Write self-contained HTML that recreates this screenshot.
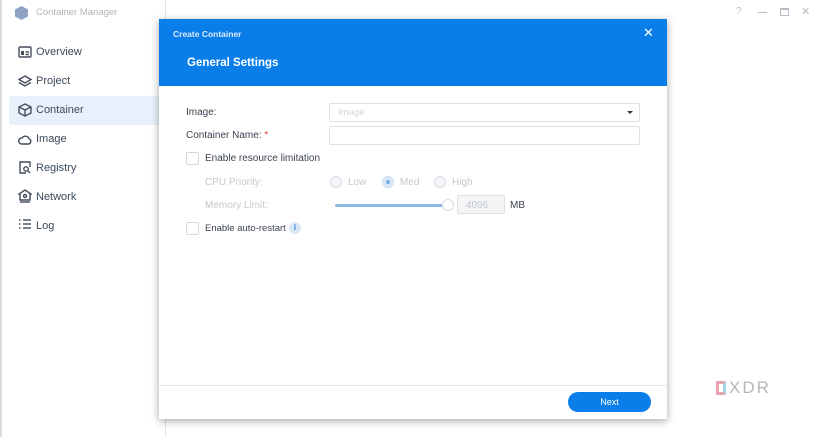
<!DOCTYPE html>
<html><head><style>
*{margin:0;padding:0;box-sizing:border-box}
body{width:825px;height:437px;overflow:hidden;background:#fff;font-family:"Liberation Sans",sans-serif;position:relative;color:#333}
.abs{position:absolute}
.nav{position:absolute;left:36px;font-size:11px;color:#3a4a5a}
.lbl{position:absolute;font-size:10px;color:#3b4350}
.dis{color:#c4c8cc}
.cb{position:absolute;width:13px;height:13px;border:1px solid #d5d9de;border-radius:2px;background:#fff}
.rad{position:absolute;width:12px;height:12px;border:1px solid #d6dde5;border-radius:50%;background:#f3f5f7}
</style></head><body>
<div class="abs" style="left:0;top:0;width:2px;height:437px;background:#d8dbe0"></div>
<div class="abs" style="left:165px;top:0;width:1px;height:437px;background:#e3e6ea"></div>
<div class="abs" style="left:15px;top:6px;width:13px;height:14px;background:#8ea3c4;clip-path:polygon(50% 0,100% 25%,100% 75%,50% 100%,0 75%,0 25%)"></div>
<div class="abs" style="left:36px;top:7px;font-size:9.5px;color:#b0b4ba">Container Manager</div>
<div class="abs" style="left:736px;top:6px;font-size:10px;color:#b8bcc2">?</div>
<div class="abs" style="left:758px;top:12px;width:9px;height:1px;background:#b8bcc2"></div>
<div class="abs" style="left:780px;top:8px;width:9px;height:8px;border:1px solid #b8bcc2;border-top-width:2px"></div>
<div class="abs" style="left:801px;top:5px;font-size:11px;color:#b8bcc2">✕</div>
<div class="abs" style="left:9px;top:96px;width:156px;height:29px;background:#e8f1fb;border-radius:3px"></div>
<svg class="abs" style="left:18px;top:45px" width="14" height="200" fill="none" stroke="#444d5c" stroke-width="1.4">
 <rect x="1" y="2" width="12" height="10" rx="1"/><rect x="3" y="6" width="3" height="4" fill="#444d5c" stroke="none"/><line x1="7.5" y1="7" x2="11" y2="7"/><line x1="7.5" y1="9.5" x2="11" y2="9.5"/>
 <path d="M7 31 L13 34.5 L7 38 L1 34.5 Z"/><path d="M1 37.5 L7 41 L13 37.5"/>
 <path d="M7 59 L13 62 L13 68 L7 71 L1 68 L1 62 Z"/><path d="M1 62 L7 65 L13 62 M7 65 L7 71"/>
 <path d="M3.5 99 A3 3 0 0 1 4 93 A4 4 0 0 1 11 93.5 A3 3 0 0 1 11 99 Z"/>
 <path d="M8 128 L2 128 L2 117 L12 117 L12 122"/><circle cx="8" cy="124" r="2.2"/><line x1="9.5" y1="125.5" x2="12" y2="128"/>
 <path d="M7 145 L13 149 L12 149 L12 155 L2 155 L2 149 L1 149 Z"/><circle cx="7" cy="151" r="1.5"/><line x1="2" y1="157" x2="12" y2="157"/>
 <line x1="1" y1="175" x2="2.5" y2="175"/><line x1="5" y1="175" x2="13" y2="175"/><line x1="1" y1="179" x2="2.5" y2="179"/><line x1="5" y1="179" x2="13" y2="179"/><line x1="1" y1="183" x2="2.5" y2="183"/><line x1="5" y1="183" x2="13" y2="183"/>
</svg>
<div class="nav" style="top:46px">Overview</div>
<div class="nav" style="top:75px">Project</div>
<div class="nav" style="top:104px">Container</div>
<div class="nav" style="top:133px">Image</div>
<div class="nav" style="top:162px">Registry</div>
<div class="nav" style="top:191px">Network</div>
<div class="nav" style="top:220px">Log</div>

<div class="abs" style="left:159px;top:19px;width:508px;height:400px;background:#fff;box-shadow:0 2px 8px rgba(0,0,0,.35)">
 <div class="abs" style="left:0;top:0;width:508px;height:67px;background:#0a7ee8"></div>
 <div class="abs" style="left:14px;top:10px;font-size:8.5px;font-weight:bold;color:#dceaff">Create Container</div>
 <div class="abs" style="left:484px;top:6px;font-size:13px;color:#fff">✕</div>
 <div class="abs" style="left:28px;top:38px;font-size:11.5px;font-weight:bold;color:#fff">General Settings</div>
 <div class="lbl" style="left:27px;top:88px">Image:</div>
 <div class="abs" style="left:170px;top:84px;width:311px;height:19px;border:1px solid #dde1e6;border-radius:2px"></div>
 <div class="abs" style="left:179px;top:88px;font-size:9.5px;color:#d0d4d8">Image</div>
 <div class="abs" style="left:468px;top:92px;border:3px solid transparent;border-top:3.5px solid #333"></div>
 <div class="lbl" style="left:27px;top:111px">Container Name: <span style="color:#e0403a">*</span></div>
 <div class="abs" style="left:170px;top:107px;width:311px;height:19px;border:1px solid #dde1e6;border-radius:2px"></div>
 <div class="cb" style="left:27px;top:133px"></div><div class="lbl" style="left:46px;top:134px">Enable resource limitation</div>
 <div class="lbl dis" style="left:46px;top:158px">CPU Priority:</div>
 <div class="rad" style="left:171px;top:157px"></div><div class="lbl dis" style="left:189px;top:158px">Low</div>
 <div class="rad" style="left:223px;top:157px;background:#dbe9f7;border-color:#cfe0f2"><div style="margin:3px;width:4px;height:4px;border-radius:50%;background:#76aee8"></div></div><div class="lbl dis" style="left:241px;top:158px">Med</div>
 <div class="rad" style="left:275px;top:157px"></div><div class="lbl dis" style="left:293px;top:158px">High</div>
 <div class="lbl dis" style="left:46px;top:181px">Memory Limit:</div>
 <div class="abs" style="left:176px;top:185px;width:108px;height:3px;background:#8dbbe8;border-radius:2px"></div>
 <div class="rad" style="left:283px;top:180px;background:#fff"></div>
 <div class="abs" style="left:298px;top:176px;width:48px;height:19px;border:1px solid #dde1e6;background:#f4f5f7;border-radius:2px"></div>
 <div class="lbl dis" style="left:307px;top:181px">4096</div>
 <div class="lbl" style="left:351px;top:181px">MB</div>
 <div class="cb" style="left:27px;top:203px"></div><div class="lbl" style="left:46px;top:204px;font-size:9.5px">Enable auto-restart</div>
 <div class="abs" style="left:130px;top:203px;width:12px;height:12px;border-radius:50%;background:#d8e8f8;color:#2d7fd6;font-size:8px;font-weight:bold;text-align:center;line-height:12px">i</div>
 <div class="abs" style="left:0;top:366px;width:508px;height:1px;background:#e6e8eb"></div>
 <div class="abs" style="left:409px;top:373px;width:83px;height:20px;background:#0a7ee8;border-radius:10px;color:#fff;font-size:9px;text-align:center;line-height:20px">Next</div>
</div>
<div class="abs" style="left:716px;top:381px;width:10px;height:14px;border:3px solid #e8a2b0;border-right-color:#9fd4e4;border-radius:1px"></div>
<div class="abs" style="left:729px;top:378px;font-size:17px;color:#b4b7bc;letter-spacing:2px">XDR</div>
</body></html>
